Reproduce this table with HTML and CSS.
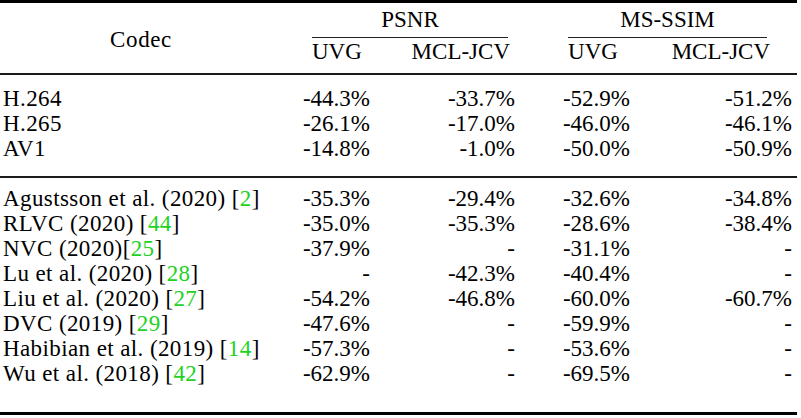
FILE: index.html
```html
<!DOCTYPE html>
<html lang="en">
<head>
<meta charset="utf-8">
<title>Codec comparison</title>
<link rel="stylesheet" href="styles.css">
</head>
<body>
<table class="results">
  <colgroup>
    <col class="c-name">
    <col class="c-psnr-uvg">
    <col class="c-psnr-mcl">
    <col class="c-ssim-uvg">
    <col class="c-ssim-mcl">
  </colgroup>
  <thead>
    <tr class="group-row">
      <th class="codec-head" rowspan="2">Codec</th>
      <th class="group" colspan="2"><div class="group-label psnr">PSNR</div></th>
      <th class="group" colspan="2"><div class="group-label ssim">MS-SSIM</div></th>
    </tr>
    <tr class="sub-row">
      <th class="sub sub-1">UVG</th>
      <th class="sub sub-2">MCL-JCV</th>
      <th class="sub sub-3">UVG</th>
      <th class="sub sub-4">MCL-JCV</th>
    </tr>
  </thead>
  <tbody class="block block-std">
    <tr><td class="name">H.264</td><td class="v v1">-44.3%</td><td class="v v2">-33.7%</td><td class="v v3">-52.9%</td><td class="v v4">-51.2%</td></tr>
    <tr><td class="name">H.265</td><td class="v v1">-26.1%</td><td class="v v2">-17.0%</td><td class="v v3">-46.0%</td><td class="v v4">-46.1%</td></tr>
    <tr><td class="name">AV1</td><td class="v v1">-14.8%</td><td class="v v2">-1.0%</td><td class="v v3">-50.0%</td><td class="v v4">-50.9%</td></tr>
  </tbody>
  <tbody class="block block-learned">
    <tr><td class="name">Agustsson et al. (2020) [<span class="cite">2</span>]</td><td class="v v1">-35.3%</td><td class="v v2">-29.4%</td><td class="v v3">-32.6%</td><td class="v v4">-34.8%</td></tr>
    <tr><td class="name">RLVC (2020) [<span class="cite">44</span>]</td><td class="v v1">-35.0%</td><td class="v v2">-35.3%</td><td class="v v3">-28.6%</td><td class="v v4">-38.4%</td></tr>
    <tr><td class="name">NVC (2020)[<span class="cite">25</span>]</td><td class="v v1">-37.9%</td><td class="v v2">-</td><td class="v v3">-31.1%</td><td class="v v4">-</td></tr>
    <tr><td class="name">Lu et al. (2020) [<span class="cite">28</span>]</td><td class="v v1">-</td><td class="v v2">-42.3%</td><td class="v v3">-40.4%</td><td class="v v4">-</td></tr>
    <tr><td class="name">Liu et al. (2020) [<span class="cite">27</span>]</td><td class="v v1">-54.2%</td><td class="v v2">-46.8%</td><td class="v v3">-60.0%</td><td class="v v4">-60.7%</td></tr>
    <tr><td class="name">DVC (2019) [<span class="cite">29</span>]</td><td class="v v1">-47.6%</td><td class="v v2">-</td><td class="v v3">-59.9%</td><td class="v v4">-</td></tr>
    <tr><td class="name">Habibian et al. (2019) [<span class="cite">14</span>]</td><td class="v v1">-57.3%</td><td class="v v2">-</td><td class="v v3">-53.6%</td><td class="v v4">-</td></tr>
    <tr><td class="name">Wu et al. (2018) [<span class="cite">42</span>]</td><td class="v v1">-62.9%</td><td class="v v2">-</td><td class="v v3">-69.5%</td><td class="v v4">-</td></tr>
  </tbody>
</table>
</body>
</html>
```

FILE: styles.css
```css
html, body {
  margin: 0;
  padding: 0;
  background: #ffffff;
}

body {
  font-family: "Liberation Serif", "Times New Roman", serif;
  font-size: 23px;
  color: #000000;
}

.results {
  width: 797px;
  table-layout: fixed;
  border-collapse: collapse;
  border-top: 3px solid #000000;
  border-bottom: 3px solid #000000;
}

.c-name { width: 290px; }
.c-psnr-uvg { width: 90px; }
.c-psnr-mcl { width: 150px; }
.c-ssim-uvg { width: 120px; }
.c-ssim-mcl { width: 147px; }

.results th,
.results td {
  padding: 0;
  font-weight: normal;
  line-height: 26px;
  white-space: nowrap;
}

/* header */
.results .codec-head {
  text-align: center;
  vertical-align: middle;
  padding: 4px 8px 0 0;
  letter-spacing: 0.6px;
}

.results .group {
  padding-top: 5px;
  vertical-align: bottom;
}

.group-label {
  line-height: 24px;
  padding-bottom: 5px;
  text-align: center;
  border-bottom: 1px solid #222222;
}

.psnr { margin: 0 22px 0 22px; }
.ssim { margin: 0 30px 0 38px; }

.results .sub {
  padding-top: 1px;
  padding-bottom: 8px;
}

.results .sub-1 { text-align: left; padding-left: 22px; }
.results .sub-2 { text-align: right; padding-right: 20px; }
.results .sub-3 { text-align: left; padding-left: 38px; }
.results .sub-4 { text-align: right; padding-right: 27px; }

/* body */
.results .block td {
  line-height: 25px;
}

.results .block tr:first-child td {
  border-top: 2px solid #1a1a1a;
}

.results .block-std tr:first-child td { padding-top: 11px; }
.results .block-std tr:last-child td { padding-bottom: 15px; }

.results .block-learned tr:first-child td { padding-top: 8px; }
.results .block-learned tr:last-child td { padding-bottom: 26px; }

.results .name {
  text-align: left;
  padding-left: 3px;
  letter-spacing: 0.4px;
}

.results .v { text-align: right; }
.results .v1 { padding-right: 10px; }
.results .v2 { padding-right: 15px; }
.results .v3 { padding-right: 20px; }
.results .v4 { padding-right: 5px; }

.cite {
  color: #1ed21e;
}
```
